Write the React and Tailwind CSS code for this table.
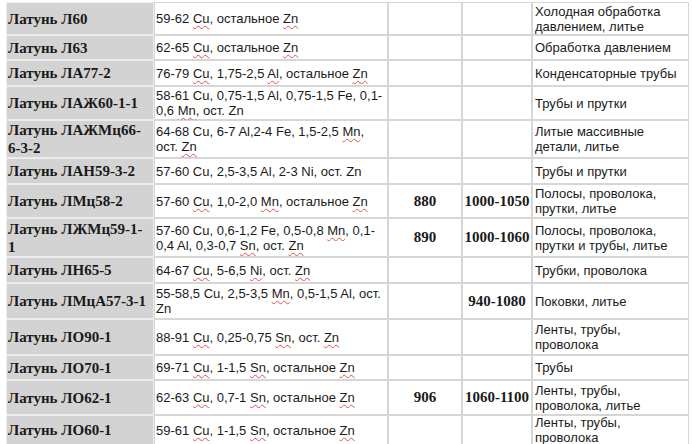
const brasses = [
  { name: "Латунь Л60", comp: "59-62 {Cu}, остальное {Zn}", use: "Холодная обработка\nдавлением, литье" },
  { name: "Латунь Л63", comp: "62-65 {Cu}, остальное {Zn}", use: "Обработка давлением" },
  { name: "Латунь ЛА77-2", comp: "76-79 {Cu}, 1,75-2,5 {Al}, остальное {Zn}", use: "Конденсаторные трубы" },
  { name: "Латунь ЛАЖ60-1-1", comp: "58-61 Cu, 0,75-1,5 Al, 0,75-1,5 Fe, 0,1-\n0,6 {Mn}, ост. Zn", use: "Трубы и прутки" },
  { name: "Латунь ЛАЖМц66-\n6-3-2", comp: "64-68 Cu, 6-7 Al,2-4 Fe, 1,5-2,5 {Mn},\nост. {Zn}", use: "Литые массивные\nдетали, литье" },
  { name: "Латунь ЛАН59-3-2", comp: "57-60 Cu, 2,5-3,5 Al, 2-3 Ni, ост. Zn", use: "Трубы и прутки" },
  { name: "Латунь ЛМц58-2", comp: "57-60 {Cu}, 1,0-2,0 {Mn}, остальное {Zn}", t1: "880", t2: "1000-1050", use: "Полосы, проволока,\nпрутки, литье" },
  { name: "Латунь ЛЖМц59-1-\n1", comp: "57-60 Cu, 0,6-1,2 Fe, 0,5-0,8 {Mn}, 0,1-\n0,4 Al, 0,3-0,7 {Sn}, ост. {Zn}", t1: "890", t2: "1000-1060", use: "Полосы, проволока,\nпрутки и трубы, литье" },
  { name: "Латунь ЛН65-5", comp: "64-67 {Cu}, 5-6,5 {Ni}, ост. {Zn}", use: "Трубки, проволока" },
  { name: "Латунь ЛМцА57-3-1", comp: "55-58,5 Cu, 2,5-3,5 {Mn}, 0,5-1,5 Al, ост.\nZn", t2: "940-1080", use: "Поковки, литье" },
  { name: "Латунь ЛО90-1", comp: "88-91 {Cu}, 0,25-0,75 {Sn}, ост. {Zn}", use: "Ленты, трубы,\nпроволока" },
  { name: "Латунь ЛО70-1", comp: "69-71 {Cu}, 1-1,5 {Sn}, остальное {Zn}", use: "Трубы" },
  { name: "Латунь ЛО62-1", comp: "62-63 {Cu}, 0,7-1 {Sn}, остальное {Zn}", t1: "906", t2: "1060-1100", use: "Ленты, трубы,\nпроволока, литье" },
  { name: "Латунь ЛО60-1", comp: "59-61 {Cu}, 1-1,5 {Sn}, остальное {Zn}", use: "Ленты, трубы,\nпроволока" },
]

// words in {} get the red spell-check squiggle
function Composition({ text }) {
  return text.split(/(\{[^}]+\})/).map((part, i) =>
    part.startsWith("{") ? (
      <span key={i} className="underline decoration-wavy decoration-[#e05050] decoration-1 underline-offset-2">
        {part.slice(1, -1)}
      </span>
    ) : (
      <span key={i}>{part}</span>
    )
  )
}

export default function App() {
  const white = "bg-white border border-[#d6d6d6] flex items-center"
  const serif = "font-['Liberation_Serif',serif] font-bold"
  const sans = "font-['Liberation_Sans',Arial,sans-serif] text-[13px] leading-[15px] whitespace-pre-line"

  return (
    <div className="min-h-screen bg-white pt-[2px] pl-[6px] text-[#1a1a1a]">
      <div className="grid grid-cols-[148px_234px_74px_70px_157px] grid-rows-[33px_25px_26px_34px_38px_26px_34px_39px_26px_36px_36px_25px_35px_30px]">
        {brasses.map((row) => [
          <div key={row.name + "a"} className={`bg-[#d3d3d3] border border-[#ececec] flex items-center pl-[1px] whitespace-pre-line text-[15px] leading-[18px] ${serif}`}>
            {row.name}
          </div>,
          <div key={row.name + "b"} className={`${white} pl-[1px] ${sans}`}>
            <div><Composition text={row.comp} /></div>
          </div>,
          <div key={row.name + "c"} className={`${white} justify-center text-[15px] ${serif}`}>
            {row.t1}
          </div>,
          <div key={row.name + "d"} className={`${white} justify-center text-[15px] ${serif}`}>
            {row.t2}
          </div>,
          <div key={row.name + "e"} className={`${white} pl-[2px] ${sans}`}>
            {row.use}
          </div>,
        ])}
      </div>
    </div>
  )
}
